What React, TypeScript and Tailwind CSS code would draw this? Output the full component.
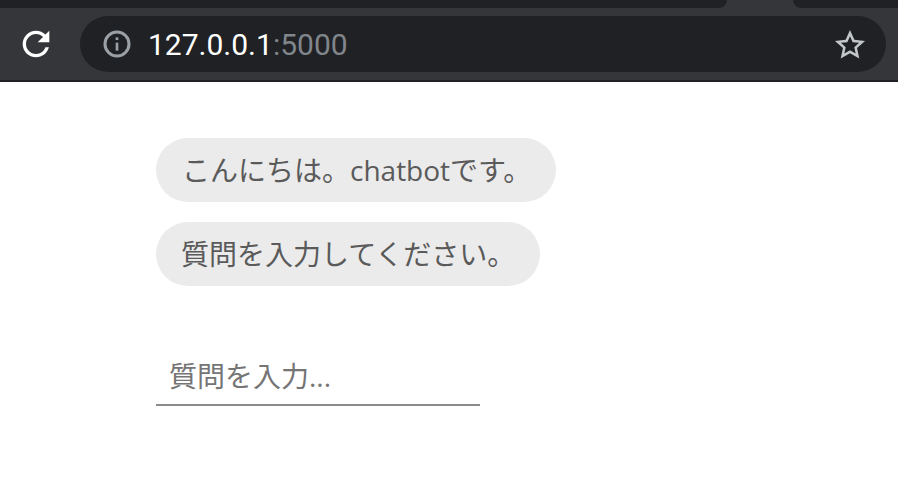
import React from "react";

const font = { fontFamily: '"Open Sans", "Noto Sans CJK JP", sans-serif' };

function Bubble({ children, left }: { children: React.ReactNode; left: string }) {
  return (
    <div className={"self-start h-16 flex items-center pr-[25px] rounded-[32px] bg-[#ebebeb] text-[#5a5a5a] text-[28px] leading-none whitespace-nowrap " + left}>
      {children}
    </div>
  );
}

export default function App() {
  return (
    <div className="w-[898px] h-[501px] overflow-hidden bg-white flex flex-col" style={font}>
      <div className="h-2 bg-[#35363a] flex justify-between">
        <div className="w-[727px] h-2 bg-[#202124] rounded-br-[16px]" />
        <div className="w-[105px] h-2 bg-[#202124] rounded-bl-[16px]" />
      </div>
      <div className="h-[72px] bg-[#35363a] flex items-center pl-[16px]">
        <svg width="40" height="40" viewBox="0 0 24 24" className="shrink-0 mr-[24px]">
          <path
            fill="#ffffff"
            d="M17.65 6.35A7.958 7.958 0 0 0 12 4c-4.42 0-7.99 3.58-7.99 8s3.57 8 7.99 8c3.73 0 6.84-2.55 7.73-6h-2.08A5.99 5.99 0 0 1 12 18c-3.31 0-6-2.69-6-6s2.69-6 6-6c1.66 0 3.14.69 4.22 1.78L13 11h7V4l-2.35 2.35z"
          />
        </svg>
        <div className="w-[806px] h-14 rounded-[28px] bg-[#202124] flex items-center pl-[21px] pr-[21px]" style={{ fontFamily: '"Roboto", sans-serif' }}>
          <svg width="32" height="32" viewBox="0 0 24 24" className="shrink-0">
            <circle cx="12" cy="12" r="9" fill="none" stroke="#9aa0a6" strokeWidth="2.3" />
            <rect x="11" y="11" width="2" height="6" fill="#9aa0a6" />
            <rect x="11" y="7" width="2" height="2" fill="#9aa0a6" />
          </svg>
          <div className="ml-[15px] mt-[2px] text-[30px] leading-none text-white whitespace-nowrap">
            127.0.0.1<span className="text-[#80868b]">:5000</span>
          </div>
          <svg width="30" height="30" viewBox="0 0 30 30" className="ml-auto shrink-0 overflow-visible">
            <path
              fill="#c4c7c9"
              fillRule="evenodd"
              d="M15 1L19.35 10.81L30.03 11.92L22.04 19.09L24.29 29.58L15 24.2L5.71 29.58L7.96 19.09L-0.03 11.92L10.65 10.81ZM15 7.2L12.35 13.16L5.87 13.83L10.72 18.19L9.36 24.57L15 21.3L20.64 24.57L19.28 18.19L24.13 13.83L17.65 13.16Z"
            />
          </svg>
        </div>
      </div>
      <div className="h-[2px] bg-[#202124]" />
      <div className="flex flex-col pl-[156px] pt-14">
        <div className="flex flex-col gap-5">
          <Bubble left="pl-[26px]">こんにちは。chatbotです。</Bubble>
          <Bubble left="pl-[25px]">質問を入力してください。</Bubble>
        </div>
        <input
          placeholder="質問を入力..."
          className="mt-[50px] w-[324px] h-[70px] pl-[13px] pr-[14px] pt-[11px] bg-white border-b-2 border-[#8a8a8a] outline-none text-[28px] placeholder:text-[#757575]"
        />
      </div>
    </div>
  );
}
